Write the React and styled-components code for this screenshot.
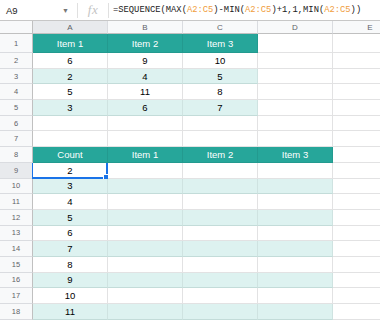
import React from "react";
import styled, { createGlobalStyle, css } from "styled-components";

const Global = createGlobalStyle`
  html, body { margin: 0; padding: 0; background: #fff; }
  body { width: 380px; height: 324px; overflow: hidden; font-family: "Liberation Sans", Arial, sans-serif; }
`;

const Page = styled.div`
  width: 380px;
  height: 324px;
  overflow: hidden;
  display: flex;
  flex-direction: column;
`;

const FormulaBar = styled.div`
  height: 21px;
  flex: none;
  box-sizing: border-box;
  border-bottom: 1px solid #c7c7c7;
  display: flex;
  align-items: center;
  background: #fff;
`;

const NameBox = styled.div`
  width: 77px;
  height: 100%;
  box-sizing: border-box;
  display: flex;
  align-items: center;
  justify-content: space-between;
  padding: 0 6px 0 6px;
  font-size: 9.5px;
  color: #222;
`;

const Caret = styled.span`
  font-size: 7px;
  color: #777;
  margin-right: 2px;
`;

const Divider = styled.div`
  width: 1px;
  height: 15px;
  background: #e0e0e0;
  flex: none;
`;

const Fx = styled.div`
  width: 30px;
  text-align: center;
  font-family: "Liberation Serif", "DejaVu Serif", serif;
  font-style: italic;
  font-size: 13px;
  color: #c4c4c4;
  letter-spacing: 0.5px;
`;

const Formula = styled.div`
  padding-left: 4px;
  font-family: "Liberation Mono", "DejaVu Sans Mono", monospace;
  font-size: 8.8px;
  color: #222;
  white-space: nowrap;
`;

const Ref = styled.span`
  color: #f09d3c;
`;

const Grid = styled.div`
  display: grid;
  grid-template-columns: 33px repeat(5, 75px);
  grid-template-rows: 13px 19px repeat(17, 15.7px);
`;

const Corner = styled.div`
  background: #f8f9fa;
  box-sizing: border-box;
  border-right: 1px solid #c0c0c0;
  border-bottom: 1px solid #c0c0c0;
`;

const ColHead = styled.div`
  background: ${(p) => (p.$active ? "#e8eaed" : "#f8f9fa")};
  box-sizing: border-box;
  border-right: 1px solid #dadce0;
  border-bottom: 1px solid #c0c0c0;
  display: flex;
  align-items: center;
  justify-content: center;
  font-size: 8px;
  color: #5f6368;
`;

const RowHead = styled.div`
  background: ${(p) => (p.$active ? "#e8eaed" : "#f8f9fa")};
  box-sizing: border-box;
  border-right: 1px solid #c0c0c0;
  border-bottom: 1px solid #dadce0;
  display: flex;
  align-items: center;
  justify-content: center;
  font-size: 7.5px;
  color: #5f6368;
`;

const tones = {
  head: css`
    background: #26a69a;
    color: #fff;
    border-right-color: #239a8f;
    border-bottom-color: #239a8f;
  `,
  light: css`
    background: #ddf2f0;
    border-right-color: #cfe3e1;
    border-bottom-color: #c3dcd9;
  `,
  plain: css``,
};

const Cell = styled.div`
  position: relative;
  box-sizing: border-box;
  border-right: 1px solid #e2e2e3;
  border-bottom: 1px solid #e2e2e3;
  display: flex;
  align-items: center;
  justify-content: center;
  font-size: 9.5px;
  color: #000;
  background: #fff;
  ${(p) => tones[p.$tone || "plain"]}
`;

const Selection = styled.div`
  position: absolute;
  left: -1px;
  top: 0;
  right: -1px;
  bottom: -1px;
  border-left: 1px solid #1a73e8;
  border-right: 2px solid #1a73e8;
  border-bottom: 2px solid #1a73e8;
  pointer-events: none;
`;

const Handle = styled.div`
  position: absolute;
  right: -4px;
  bottom: -4px;
  width: 5px;
  height: 5px;
  background: #1a73e8;
  border: 1px solid #fff;
  box-sizing: content-box;
`;

const cols = ["A", "B", "C", "D", "E"];

const rows = [];
rows.push({ n: 1, tone: "head", span: 3, cells: ["Item 1", "Item 2", "Item 3"] });
[["6", "9", "10"], ["2", "4", "5"], ["5", "11", "8"], ["3", "6", "7"]].forEach((c, i) =>
  rows.push({ n: i + 2, tone: i % 2 ? "light" : "plain", span: 3, cells: c })
);
rows.push({ n: 6, span: 0, cells: [] });
rows.push({ n: 7, span: 0, cells: [] });
rows.push({ n: 8, tone: "head", span: 4, cells: ["Count", "Item 1", "Item 2", "Item 3"] });
for (let v = 2; v <= 11; v++) {
  const n = v + 7;
  rows.push({ n, tone: n % 2 === 0 ? "light" : "plain", span: 4, cells: [String(v)] });
}

export default function App() {
  return (
    <Page>
      <Global />
      <FormulaBar>
        <NameBox>
          <span>A9</span>
          <Caret>▼</Caret>
        </NameBox>
        <Divider />
        <Fx>fx</Fx>
        <Divider />
        <Formula>
          =SEQUENCE(MAX(<Ref>A2:C5</Ref>)-MIN(<Ref>A2:C5</Ref>)+1,1,MIN(<Ref>A2:C5</Ref>))
        </Formula>
      </FormulaBar>
      <Grid>
        <Corner />
        {cols.map((c) => (
          <ColHead key={c} $active={c === "A"}>
            {c}
          </ColHead>
        ))}
        {rows.map((r) => (
          <React.Fragment key={r.n}>
            <RowHead $active={r.n === 9}>{r.n}</RowHead>
            {cols.map((c, i) => (
              <Cell key={c} $tone={i < r.span ? r.tone : "plain"}>
                {r.cells[i] || ""}
                {r.n === 9 && i === 0 && (
                  <Selection>
                    <Handle />
                  </Selection>
                )}
              </Cell>
            ))}
          </React.Fragment>
        ))}
      </Grid>
    </Page>
  );
}
